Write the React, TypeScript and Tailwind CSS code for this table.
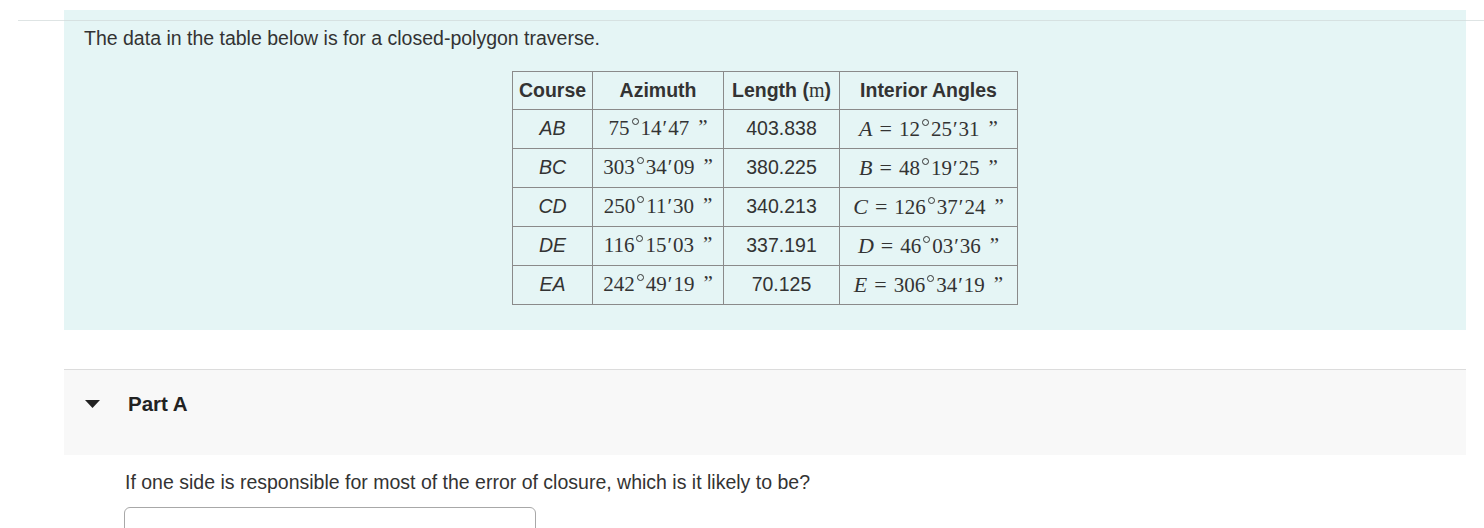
import React from "react";

type Row = {
  course: string;
  az: [string, string, string];
  len: string;
  letter: string;
  ang: [string, string, string];
};

const rows: Row[] = [
  { course: "AB", az: ["75", "14", "47"], len: "403.838", letter: "A", ang: ["12", "25", "31"] },
  { course: "BC", az: ["303", "34", "09"], len: "380.225", letter: "B", ang: ["48", "19", "25"] },
  { course: "CD", az: ["250", "11", "30"], len: "340.213", letter: "C", ang: ["126", "37", "24"] },
  { course: "DE", az: ["116", "15", "03"], len: "337.191", letter: "D", ang: ["46", "03", "36"] },
  { course: "EA", az: ["242", "49", "19"], len: "70.125", letter: "E", ang: ["306", "34", "19"] },
];

const serif = "font-['Liberation_Serif','DejaVu_Serif',serif]";

function Dms({ v }: { v: [string, string, string] }) {
  return (
    <span className={`${serif} text-[21px] whitespace-nowrap`}>
      {v[0]}
      <span className="inline-block w-[7px] h-[7px] rounded-full border-[1.3px] border-[#333] mx-[2px] align-[0.5em]" />
      {v[1]}
      <span className="mx-[1px]">′</span>
      {v[2]}
      <span className="inline-block w-[9px]" />
      <span className="relative -top-[1px]">”</span>
    </span>
  );
}

function TraverseTable() {
  const cell = "border border-[#8a8a8a] text-center align-middle p-0";
  return (
    <table className="border-collapse mx-auto text-[#333]">
      <thead>
        <tr className="h-[38px] text-[19.5px] font-bold">
          <th className={`${cell} w-[80px]`}>Course</th>
          <th className={`${cell} w-[131px]`}>Azimuth</th>
          <th className={`${cell} w-[116px]`}>
            Length (<span className={`${serif} font-normal text-[20px]`}>m</span>)
          </th>
          <th className={`${cell} w-[178px]`}>Interior Angles</th>
        </tr>
      </thead>
      <tbody>
        {rows.map((r) => (
          <tr key={r.course} className="h-[39px] text-[19.5px]">
            <td className={`${cell} italic`}>{r.course}</td>
            <td className={cell}>
              <Dms v={r.az} />
            </td>
            <td className={cell}>{r.len}</td>
            <td className={cell}>
              <span className={`${serif} text-[22px] italic`}>{r.letter}</span>
              <span className={`${serif} text-[22px] mx-[7px]`}>=</span>
              <Dms v={r.ang} />
            </td>
          </tr>
        ))}
      </tbody>
    </table>
  );
}

export default function App() {
  return (
    <div className="relative w-[1484px] h-[528px] bg-white overflow-hidden font-['Liberation_Sans',Arial,sans-serif] text-[#333]">
      {/* thin rule under the top edge */}
      <div className="absolute top-[20px] left-[18px] right-0 h-px bg-[#d0d8d8]/70" />

      <div className="pt-[10px]">
        <div className="ml-[64px] w-[1402px] bg-[#e5f5f5] px-5 pt-[17px] pb-[25px]">
          <p className="text-[19.5px] leading-[23px]">The data in the table below is for a closed-polygon traverse.</p>
          <div className="mt-[21px]">
            <TraverseTable />
          </div>
        </div>

        <div className="ml-[64px] w-[1402px] mt-[39px] border-t border-[#dcdcdc] bg-[#f8f8f8] h-[86px] flex items-start pt-[22px]">
          <svg width="15" height="8" viewBox="0 0 15 8" className="ml-[21px] mt-[8px]">
            <path d="M0 0 H15 L7.5 8 Z" fill="#222" />
          </svg>
          <span className="ml-[28px] text-[20.5px] leading-[24px] font-bold text-[#222]">Part A</span>
        </div>

        <div className="ml-[125px] mt-[16px]">
          <p className="text-[19.5px] leading-[23px]">
            If one side is responsible for most of the error of closure, which is it likely to be?
          </p>
          <div className="mt-[13px] -ml-px w-[412px] h-[40px] border border-[#a8a8a8] rounded-[6px] bg-white" />
        </div>
      </div>
    </div>
  );
}
